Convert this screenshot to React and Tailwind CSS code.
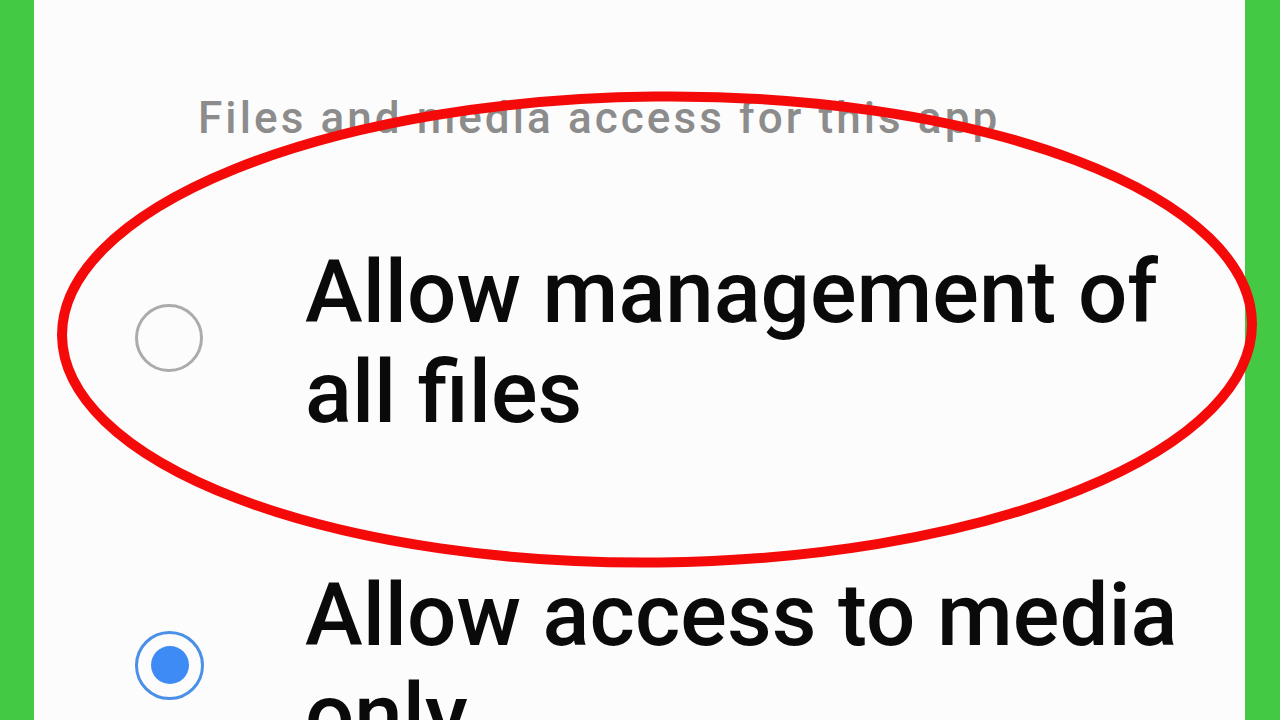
export default function App() {
  return (
    <div className="relative flex h-[720px] w-[1280px] overflow-hidden bg-[#fcfcfc]" style={{ fontFamily: "Roboto, 'Noto Sans', sans-serif" }}>
      <div className="w-[34px] shrink-0 bg-[#44c945]" />
      <div className="flex-1 flex flex-col">
        <div className="pt-[90px] pl-[164px] text-[44px] leading-[56px] font-medium tracking-[3.1px] whitespace-nowrap text-[#8c8c8c]">
          Files and media access for this app
        </div>
        <div className="mt-[96px] flex items-center">
          <div className="ml-[101px] mb-[8px] h-[68px] w-[68px] shrink-0 rounded-full border-[3px] border-[#ababab]" />
          <div className="ml-[102px] text-[87px] leading-[100px] font-medium whitespace-nowrap text-[#0a0a0a]">
            Allow management of<br />all files
          </div>
        </div>
        <div className="mt-[123px] flex items-center">
          <div className="ml-[101px] flex h-[69px] w-[69px] shrink-0 items-center justify-center rounded-full border-[3px] border-[#4a8fe8]">
            <div className="h-[38px] w-[38px] rounded-full bg-[#3f8bf5]" />
          </div>
          <div className="ml-[101px] text-[87px] leading-[100px] font-medium whitespace-nowrap text-[#0a0a0a]">
            Allow access to media<br />only
          </div>
        </div>
      </div>
      <div className="w-[35px] shrink-0 bg-[#44c945]" />
      <svg className="absolute left-0 top-0" width="1280" height="720" viewBox="0 0 1280 720">
        <ellipse cx="657" cy="329.5" rx="595" ry="233" fill="none" stroke="#f50a0a" strokeWidth="10" transform="rotate(-0.6 657 329.5)" />
      </svg>
    </div>
  );
}
